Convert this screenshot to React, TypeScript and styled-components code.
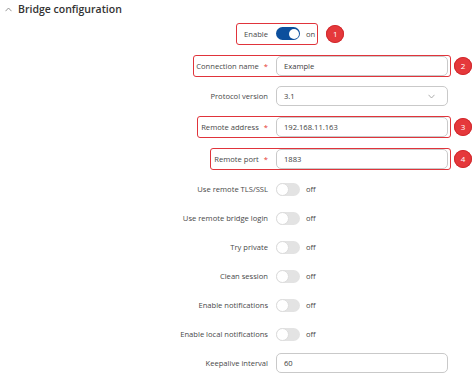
import React from "react";
import styled, { createGlobalStyle } from "styled-components";

const Global = createGlobalStyle`
  html, body { margin: 0; padding: 0; background: #ffffff; }
  body { font-family: "Open Sans", "Liberation Sans", sans-serif; }
`;

const Page = styled.div`
  width: 474px;
  height: 379px;
  overflow: hidden;
  background: #fff;
`;

const Header = styled.div`
  display: flex;
  align-items: center;
  gap: 6px;
  height: 18px;
  padding-left: 5px;
  font-size: 10.5px;
  font-weight: 600;
  color: #333;
`;

const Form = styled.div`
  display: flex;
  flex-direction: column;
  gap: 9px;
  padding-top: 4px;
`;

const Row = styled.div<{ $marked?: boolean }>`
  display: flex;
  align-items: center;
  height: 20px;
  margin: ${(p) => (p.$marked ? "1.5px 0" : "0")};
`;

const LabelCell = styled.div`
  flex: 0 0 268px;
  display: flex;
  justify-content: flex-end;
  margin-right: 8px;
`;

const Label = styled.span<{ $pad?: number; $extent?: number }>`
  position: relative;
  line-height: 20px;
  font-size: 7.6px;
  color: #484848;
  white-space: nowrap;
  &::after {
    content: "";
    display: ${(p) => (p.$extent ? "block" : "none")};
    position: absolute;
    top: -1px;
    bottom: -1px;
    left: -${(p) => p.$pad ?? 4}px;
    right: -${(p) => p.$extent ?? 0}px;
    border: 1.5px solid #e0343b;
    border-radius: 3px;
    pointer-events: none;
  }
`;

const Star = styled.span`
  color: #e53935;
  margin-left: 5px;
`;

const Field = styled.div`
  box-sizing: border-box;
  width: 172px;
  height: 20px;
  border: 1px solid #c9c9c9;
  border-radius: 5px;
  display: flex;
  align-items: center;
  justify-content: space-between;
  padding: 0 12px 0 7px;
  font-size: 7.6px;
  color: #404040;
  background: #fff;
`;

const Toggle = styled.div<{ $on?: boolean }>`
  position: relative;
  box-sizing: border-box;
  width: 24px;
  height: 13px;
  border-radius: 7px;
  background: ${(p) => (p.$on ? "#0c4f9d" : "#e3e3e3")};
  &::after {
    content: "";
    position: absolute;
    box-sizing: border-box;
    top: ${(p) => (p.$on ? "1.5px" : "0")};
    left: ${(p) => (p.$on ? "12.5px" : "0")};
    width: ${(p) => (p.$on ? "10px" : "13px")};
    height: ${(p) => (p.$on ? "10px" : "13px")};
    border-radius: 50%;
    background: #fff;
    border: ${(p) => (p.$on ? "none" : "1px solid #dcdcdc")};
  }
`;

const State = styled.span`
  font-size: 7.6px;
  color: #484848;
  margin-left: 6px;
`;

const Badge = styled.div<{ $gap: number }>`
  width: 18px;
  height: 18px;
  margin-left: ${(p) => p.$gap}px;
  border-radius: 50%;
  background: #e5383b;
  box-shadow: inset 0 0 0 1px #d02a2e;
  color: #fff;
  font-size: 8px;
  display: flex;
  align-items: center;
  justify-content: center;
`;

const Chevron = () => (
  <svg width="7" height="5" viewBox="0 0 7 5">
    <polyline points="0.5,4.2 3.5,1 6.5,4.2" fill="none" stroke="#8a8a8a" strokeWidth="0.9" />
  </svg>
);

const Caret = () => (
  <svg width="7" height="5" viewBox="0 0 7 5">
    <polyline points="0.5,0.8 3.5,4 6.5,0.8" fill="none" stroke="#9a9a9a" strokeWidth="0.8" />
  </svg>
);

const FIELD_EXTENT = 8 + 172 + 3;

type ToggleRowProps = { label: string; on?: boolean };
const ToggleRow = ({ label, on }: ToggleRowProps) => (
  <Row>
    <LabelCell>
      <Label>{label}</Label>
    </LabelCell>
    <Toggle $on={on} />
    <State>{on ? "on" : "off"}</State>
  </Row>
);

type FieldRowProps = {
  label: string;
  value: string;
  required?: boolean;
  badge?: number;
  pad?: number;
  select?: boolean;
};
const FieldRow = ({ label, value, required, badge, pad, select }: FieldRowProps) => (
  <Row $marked={!!badge}>
    <LabelCell>
      <Label $pad={pad} $extent={badge ? FIELD_EXTENT : undefined}>
        {label}
        {required && <Star>*</Star>}
      </Label>
    </LabelCell>
    <Field>
      <span>{value}</span>
      {select && <Caret />}
    </Field>
    {badge && <Badge $gap={6}>{badge}</Badge>}
  </Row>
);

export default function App() {
  return (
    <Page>
      <Global />
      <Header>
        <Chevron />
        <span>Bridge configuration</span>
      </Header>
      <Form>
        <Row $marked>
          <LabelCell>
            <Label $pad={8} $extent={50}>Enable</Label>
          </LabelCell>
          <Toggle $on />
          <State>on</State>
          <Badge $gap={11}>1</Badge>
        </Row>
        <FieldRow label="Connection name" value="Example" required badge={2} pad={3} />
        <FieldRow label="Protocol version" value="3.1" select />
        <FieldRow label="Remote address" value="192.168.11.163" required badge={3} pad={4} />
        <FieldRow label="Remote port" value="1883" required badge={4} pad={4} />
        <ToggleRow label="Use remote TLS/SSL" />
        <ToggleRow label="Use remote bridge login" />
        <ToggleRow label="Try private" />
        <ToggleRow label="Clean session" />
        <ToggleRow label="Enable notifications" />
        <ToggleRow label="Enable local notifications" />
        <FieldRow label="Keepalive interval" value="60" />
      </Form>
    </Page>
  );
}
